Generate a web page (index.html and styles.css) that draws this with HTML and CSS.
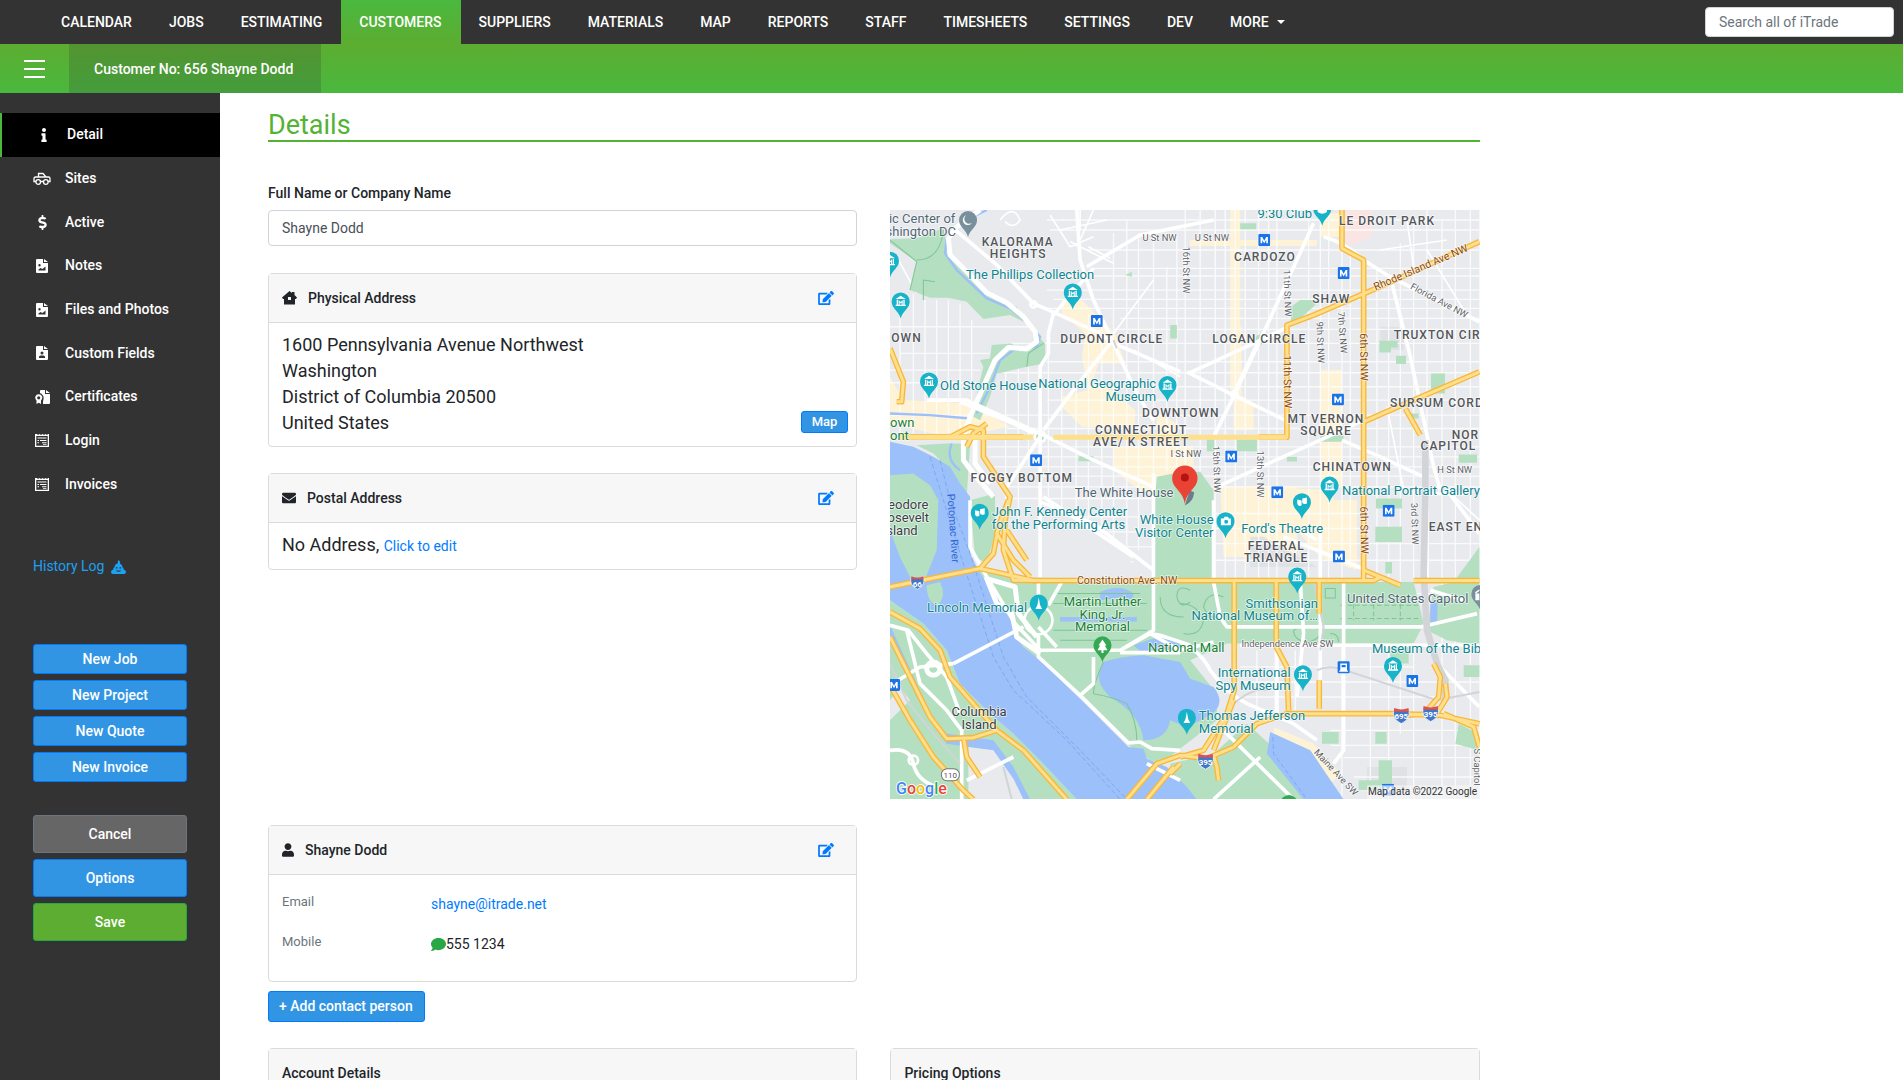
FILE: index.html
```html
<!DOCTYPE html>
<html lang="en">
<head>
<meta charset="utf-8">
<meta name="viewport" content="width=device-width, initial-scale=1">
<title>Customer 656 Shayne Dodd</title>
<link rel="stylesheet" href="styles.css">
</head>
<body>
<svg class="defs" aria-hidden="true">
  <symbol id="i-edit" viewBox="0 0 576 512"><path d="M402.6 83.2l90.2 90.2c3.8 3.8 3.8 10 0 13.8L274.4 405.6l-92.8 10.3c-12.4 1.4-22.9-9.1-21.5-21.5l10.3-92.8L388.8 83.2c3.8-3.8 10-3.8 13.8 0zm162-22.9l-48.8-48.8c-15.2-15.2-39.9-15.2-55.2 0l-35.4 35.4c-3.8 3.8-3.8 10 0 13.8l90.2 90.2c3.8 3.8 10 3.8 13.8 0l35.4-35.4c15.2-15.3 15.2-40 0-55.2zM384 346.2V448H64V128h229.8c3.2 0 6.2-1.3 8.5-3.5l40-40c7.6-7.6 2.2-20.5-8.5-20.5H48C21.5 64 0 85.5 0 112v352c0 26.5 21.5 48 48 48h352c26.5 0 48-21.5 48-48V306.2c0-10.7-12.9-16-20.5-8.5l-40 40c-2.2 2.3-3.5 5.3-3.5 8.5z"/></symbol>
  <symbol id="i-image" viewBox="0 0 12 14"><path fill-rule="evenodd" d="M1 0h6v4h5v9a1 1 0 0 1-1 1H1a1 1 0 0 1-1-1V1a1 1 0 0 1 1-1zM8 0l4 3H8zM3.500 5a1.200 1.200 0 1 0 0 2.400 1.200 1.200 0 0 0 0-2.400zM2.500 11.500h7V7.500L6.500 10 4.500 9l-2 1.500z"/></symbol>
  <symbol id="i-list" viewBox="0 0 14 13"><path fill-rule="evenodd" d="M0 0h2l1 1 1.500-1L6 1l1.500-1L9 1l1.500-1L12 1l1-1h1v13H0zM1.300 2v9.700h11.400V2zM2.500 3.500h9v1h-9zM2.500 6h1.500v1H2.500zM5 6h6.500v1H5zM2.500 8.300H4v1H2.500zM7 8.300h4.500v1H7zM8 10h3.500v.8H8z"/></symbol>
  <symbol id="pin" viewBox="-30 -30 60 85" overflow="visible"><path d="M0 51C-5 28-27 22-27 0a27 27 0 0 1 54 0C27 22 5 28 0 51z"/></symbol>
  <symbol id="museum" viewBox="-30 -30 60 85" overflow="visible"><path class="pin-teal" d="M0 51C-5 28-27 22-27 0a27 27 0 0 1 54 0C27 22 5 28 0 51z"/><path class="glyph" d="M-15-7L0-17 15-7zM-12-5h4V10h-4zM8-5h4V10H8zM-15 10h30v4h-30zM-6 10V-4l6 6 6-6v14H3V3L0 6-3 3v7z"/></symbol>
  <symbol id="metro" viewBox="-18 -18 36 36"><rect class="metro-box" x="-18" y="-18" width="36" height="36" rx="4"/><path class="glyph" d="M-11 10V-9h5L0 2 6-9h5v19H6V0L0 10-6 0v10z"/></symbol>
  <symbol id="shield" viewBox="-21 -21 42 42" overflow="visible"><path class="shield-blue" d="M-18-17Q0-9 18-17 26 8 0 20-26 8-18-17z"/><path class="shield-red" d="M-18-19Q0-12 18-19l1 9h-38z"/></symbol>
</svg>

<header class="topnav">
  <nav class="topnav-links" aria-label="Primary">
    <a href="#">CALENDAR</a><a href="#">JOBS</a><a href="#">ESTIMATING</a><a href="#" class="active" aria-current="page">CUSTOMERS</a><a href="#">SUPPLIERS</a><a href="#">MATERIALS</a><a href="#">MAP</a><a href="#">REPORTS</a><a href="#">STAFF</a><a href="#">TIMESHEETS</a><a href="#">SETTINGS</a><a href="#">DEV</a><a href="#" class="more">MORE</a>
  </nav>
  <input class="search" type="search" placeholder="Search all of iTrade" aria-label="Search all of iTrade">
</header>

<div class="subbar">
  <button class="menu-btn" type="button" aria-label="Toggle menu"><span></span><span></span><span></span></button>
  <div class="crumb">Customer No: 656 Shayne Dodd</div>
</div>

<div class="shell">
  <aside class="sidebar">
    <nav class="side-links" aria-label="Customer">
      <a href="#" class="active"><span class="ico"><svg width="6" height="14" viewBox="0 0 192 512"><path d="M20 424.229h20V279.771H20c-11.046 0-20-8.954-20-20V212c0-11.046 8.954-20 20-20h112c11.046 0 20 8.954 20 20v212.229h20c11.046 0 20 8.954 20 20V492c0 11.046-8.954 20-20 20H20c-11.046 0-20-8.954-20-20v-47.771c0-11.046 8.954-20 20-20zM96 0C56.235 0 24 32.235 24 72s32.235 72 72 72 72-32.235 72-72S135.764 0 96 0z"/></svg></span>Detail</a>
      <a href="#"><span class="ico"><svg width="18" height="14" viewBox="0 0 18 14" class="line"><path d="M3 9.500H1V6.500Q1 5 2.500 5H15.500Q17 5 17 6.500V9.500H15M7.500 9.500h3M5.500 5V1.500H10L13 5"/><circle cx="5.200" cy="10" r="2.300"/><circle cx="12.800" cy="10" r="2.300"/></svg></span>Sites</a>
      <a href="#"><span class="ico"><svg width="9" height="15" viewBox="0 0 288 512"><path d="M209.2 233.4l-108-31.6C88.7 198.2 80 186.5 80 173.500c0-16.300 13.200-29.500 29.500-29.500h66.300c12.200 0 24.200 3.700 34.200 10.500 6.100 4.100 14.300 3.100 19.500-2l34.800-34c7.100-6.900 6.100-18.400-1.800-24.500C238 74.800 207.400 64.100 176 64V16c0-8.800-7.200-16-16-16h-32c-8.800 0-16 7.200-16 16v48h-2.500C45.800 64-5.400 118.700.5 183.600c4.200 46.100 39.400 83.600 83.800 96.600l102.500 30c12.500 3.700 21.200 15.300 21.200 28.300 0 16.300-13.200 29.500-29.500 29.500h-66.300C100 368 88 364.300 78 357.500c-6.100-4.100-14.300-3.100-19.500 2l-34.800 34c-7.100 6.900-6.100 18.400 1.800 24.500 24.500 19.200 55.100 29.900 86.500 30v48c0 8.800 7.200 16 16 16h32c8.800 0 16-7.200 16-16v-48.200c46.600-.9 90.300-28.600 105.700-72.700 21.500-61.600-14.600-124.800-72.500-141.700z"/></svg></span>Active</a>
      <a href="#"><span class="ico"><svg width="12" height="14"><use href="#i-image"/></svg></span>Notes</a>
      <a href="#"><span class="ico"><svg width="12" height="14"><use href="#i-image"/></svg></span>Files and Photos</a>
      <a href="#"><span class="ico"><svg width="12" height="14" viewBox="0 0 12 14"><path fill-rule="evenodd" d="M1 0h6v4h5v9a1 1 0 0 1-1 1H1a1 1 0 0 1-1-1V1a1 1 0 0 1 1-1zM8 0l4 3H8zM6 5.500a1.500 1.500 0 1 0 0 3 1.500 1.500 0 0 0 0-3zM3 12h6v-1Q9 9.500 7.500 9.500h-3Q3 9.500 3 11z"/></svg></span>Custom Fields</a>
      <a href="#"><span class="ico"><svg width="15" height="14" viewBox="0 0 15 14"><path fill-rule="evenodd" d="M5 3V1a1 1 0 0 1 1-1h4v4h5v9a1 1 0 0 1-1 1H8V11.500Q9.500 7 7.500 5 6.500 3.500 5 3zM11 0l4 3h-4zM3.700 4.200a3.500 3.500 0 0 1 2.300 6.200V14l-2.200-1.200L1.500 14v-3.600a3.500 3.500 0 0 1 2.200-6.200zm0 2a1.600 1.600 0 1 0 0 3.200 1.600 1.600 0 0 0 0-3.200z"/></svg></span>Certificates</a>
      <a href="#"><span class="ico"><svg width="14" height="13"><use href="#i-list"/></svg></span>Login</a>
      <a href="#"><span class="ico"><svg width="14" height="13"><use href="#i-list"/></svg></span>Invoices</a>
    </nav>
    <a href="#" class="history">History Log <svg width="15" height="14" viewBox="0 0 15 14"><path fill-rule="evenodd" d="M7 0Q10 1.500 9 4q2.500.3 2.300 3 1.700.5 1.400 2.500Q15 10 15 12t-2 2H2q-2 0-2-2t2.300-2.500Q2 7.500 3.700 7 3.300 4.500 5.500 4 7.500 3 7 0zM4.800 7.300v1.200h1.700V7.300zM8.500 7.300v1.200h1.700V7.300zM4.500 10.400q3 2.800 6 0z"/></svg></a>
    <div class="side-actions">
      <button type="button" class="btn">New Job</button>
      <button type="button" class="btn">New Project</button>
      <button type="button" class="btn">New Quote</button>
      <button type="button" class="btn">New Invoice</button>
    </div>
    <div class="side-actions large">
      <button type="button" class="btn grey">Cancel</button>
      <button type="button" class="btn">Options</button>
      <button type="submit" class="btn green">Save</button>
    </div>
  </aside>

  <main class="content">
    <div class="inner">
      <h1>Details</h1>
      <div class="columns">
        <div class="col">
          <label for="fullname">Full Name or Company Name</label>
          <input id="fullname" class="field" type="text" value="Shayne Dodd">
          <section class="card">
            <header><svg width="15" height="14" viewBox="0 0 15 14"><path fill-rule="evenodd" d="M7.500 0L10 2V1h2.500v3L15 6.500 14 8h-1v5.500H2V8H1L0 6.500zM6 6v3h3V6z"/></svg><h2>Physical Address</h2><a href="#" class="edit" aria-label="Edit physical address"><svg width="16" height="14"><use href="#i-edit"/></svg></a></header>
            <div class="card-body address"><address>1600 Pennsylvania Avenue Northwest<br>Washington<br>District of Columbia 20500<br>United States</address><button type="button" class="btn small">Map</button></div>
          </section>
          <section class="card">
            <header><svg width="14" height="14" viewBox="0 0 512 512"><path d="M502.3 190.8c3.9-3.1 9.7-.2 9.7 4.7V400c0 26.500-21.500 48-48 48H48c-26.500 0-48-21.500-48-48V195.600c0-5 5.700-7.800 9.700-4.700 22.400 17.400 52.100 39.500 154.100 113.600 21.100 15.400 56.700 47.800 92.200 47.600 35.700.3 72-32.800 92.300-47.600 102-74.100 131.600-96.300 154-113.700zM256 320c23.200.4 56.600-29.200 73.400-41.400 132.700-96.300 142.800-104.700 173.400-128.700 5.800-4.500 9.200-11.500 9.200-18.900v-19c0-26.500-21.500-48-48-48H48c-26.500 0-48 21.500-48 48v19c0 7.400 3.400 14.300 9.200 18.900 30.600 23.900 40.700 32.400 173.400 128.700 16.800 12.200 50.200 41.800 73.400 41.400z"/></svg><h2>Postal Address</h2><a href="#" class="edit" aria-label="Edit postal address"><svg width="16" height="14"><use href="#i-edit"/></svg></a></header>
            <div class="card-body address"><p>No Address, <a href="#">Click to edit</a></p></div>
          </section>
        </div>
        <div class="map">
          <svg viewBox="30 30 1767 1767" role="img" aria-label="Map of Washington DC around the White House">
            <rect class="land" x="30" y="30" width="1767" height="1767"/>
            <g class="shop">
              <path d="M545 300h60l40 40 60 60 30 90h-80l-20 60 60 20 70 60v50h-160l-60-60v-30l80-20-20-100 10-70-70-60zM1050 30h30v540h-30zM1320 510h65v350h-65zM1060 570l60 40v80h-60zM830 640l60 30v80h-60zM700 740h240v130H780l-80-60zM1020 860h230v210h-220zM1250 900h180v210l-110-40-70-80zM1140 860l220 10v60h-220zM30 530l40 70 200 10 120 70-100 20H160l-130-30zM1320 40h60v70h-60zM930 120h380v18H930zM1060 380h24v200h-24zM1180 1580l120 50 80 90-30 30-170-140z"/>
            </g>
            <path class="blush" d="M1395 30h80v80l-60 25-20-10z"/>
            <g class="block">
              <path d="M140 180h60l90 100h-110zM1150 1010l160 90h-200v-90zM500 1040l240 30v60H500zM1460 1700h120v70h-120zM1500 380h70v70h-70z"/>
            </g>
            <g class="minor">
              <path d="M500 60H1797M510 90H1797M620 150H1797M640 205H1797M560 228H1797M500 270H1797M520 298H1797M500 325H1797M30 380H450M720 355H1797M700 388H1797M390 430H1797M60 460H330M500 485H1797M30 510H300M370 518H1797M30 548H290M600 560H1797M500 600H1797M30 645H1797M380 685H1797M320 740H1797M330 770H1797M340 800H1797M480 828H1797M370 860H1797M380 895H820M500 950H820M500 995H820M500 1040H820M500 1085H760M1000 940H1450M1000 985H1450M1000 1030H1797M1000 1080H1797M1330 1180H1720M1330 1210H1720M1080 1400H1600M1080 1445H1797M1080 1490H1700M1350 1590H1797M1350 1635H1797M1390 1672H1797M1420 1730H1797M1440 1770H1797"/>
              <path d="M60 280V700M100 280V700M135 300V700M170 300V700M205 300V700M240 310V700M275 360V600M377 518V900M415 500V1000M445 500V800M505 400V1130M545 560V1130M588 560V1130M625 340V1130M665 360V1130M700 100V1100M740 60V1060M775 100V1050M820 100V1130M860 200V815M890 100V815M915 30V815M960 30V815M1005 30V1140M1035 30V1140M1065 30V1140M1095 30V1140M1135 30V1140M1165 30V1140M1190 30V1140M1285 60V1140M1320 30V1500M1345 30V1140M1385 140V1797M1410 150V1100M1490 200V1140M1525 250V1797M1560 130V1600M1600 60V1797M1640 30V700M1685 60V1797M1725 30V1797M1770 30V1797M1130 1350V1540M1185 1350V1540M1245 1350V1540M1470 1350V1797"/>
            </g>
            <g class="fine">
              <path d="M510 45L570 140 640 110M540 90L680 60M570 125L700 190M600 30V90M625 140L690 175M640 30L600 120M50 170L110 280M760 450L900 530M1500 150L1700 120M1580 60L1600 200M1640 150L1750 330M1700 870L1797 960M1520 620L1570 870M700 400L820 240M360 60Q400 10 420 60 400 90 375 65M30 930Q100 800 130 920"/>
            </g>
            <g class="park">
              <path d="M30 118L110 115 190 85 205 170 290 240 345 300 410 320 440 370 390 345 310 357 260 305 205 293 150 293 90 270 110 185 30 130z"/>
              <path d="M335 435L395 430 420 455 480 415 495 430V490L440 500 375 515 350 520 330 590 300 660 280 650 295 560 310 500 300 480 330 475z"/>
              <path d="M1233 320L1260 300h40l5 15-45 40-28 15zM1497 422h55v20h-20v15h-35zM1547 467h30v25h-30zM1652 520h42v60h-30l-12-10zM1135 405q18 0 10 28h-15zM1070 718h60v35h-60zM980 718h22v35h-22zM1320 705h70v20h-70zM870 375h20v40h-20zM735 225l20-10v15zM595 768h45v15h-45zM1735 763h55v25h-55zM1080 70h48v18h-48zM1590 640h25v15h-25zM1220 770h30v14h-30zM1487 895h78v30h-78zM1485 980h80v45h-80zM1515 1085h20v35h-20zM820 1500h20v20h-20zM1325 1595h50v35h-50zM1485 1595h34v35h-34z"/>
              <circle cx="480" cy="710" r="15"/><circle cx="1138" cy="416" r="12"/>
              <path d="M830 830L880 820 960 815 1000 870V1145H820V950z"/>
              <path d="M270 900L345 880 345 1000 320 1090 285 1070zM290 1110L470 1145H1600L1630 1270 1600 1330H1040L930 1380 1010 1480 1010 1560 880 1660 850 1690 810 1680 745 1635 600 1490 430 1340 395 1290 395 1240z"/>
              <path d="M1660 1160L1720 1145 1797 1040V1335L1700 1320 1640 1290zM1750 1395h47v35h-47zM1735 1570l60 30v50l-70-20zM1530 1290h55v100h-40l-15-20z"/>
              <path d="M30 1200L130 1270 200 1350 240 1450 330 1540 400 1600 490 1690 590 1797H30zM870 1690L1000 1660 1100 1570 1200 1660 1280 1797H900zM1435 1770h100v-90h-40v60h-60z"/>
              <path d="M200 730L270 730 260 890 210 810 160 760 110 735z"/>
            </g>
            <g class="water">
              <path d="M30 725L100 740 160 770 210 800 240 850 270 890V1060L300 1120 345 1180 395 1250 400 1300 430 1340 480 1380 600 1495 745 1640 790 1645 800 1675 860 1700 920 1760 950 1797H590L490 1690 400 1600 330 1540 240 1450 200 1350 130 1270 30 1200z"/>
              <path d="M670 1385Q710 1370 790 1365L900 1385 930 1435 1000 1460Q1040 1510 990 1545L920 1580 870 1560Q860 1620 790 1620 780 1540 690 1490 650 1450 657 1420z"/>
              <path d="M760 1335L820 1315 900 1320V1345L780 1352zM1170 1595L1290 1650 1390 1797H1270L1160 1660zM1650 1205h22l-2 70-20-10zM540 1250h230v14H540zM660 1175q60-25 100 5 0 25-30 10l-70 10z"/>
              <path d="M30 1275L60 1340 110 1450 160 1560 200 1600 340 1620 400 1700 450 1797H425L370 1720 330 1650 200 1630 110 1490 30 1320z"/>
            </g>
            <path class="creek" d="M320 30L230 75 200 115 195 160 230 210 320 295 390 325 440 365 480 410 470 440 400 450 360 480 330 560 290 640M30 640L150 645 270 655M215 730Q195 780 240 810"/>
            <g class="park">
              <path d="M30 825L100 820 150 855 175 900 170 1050 130 1150 95 1140 60 1070 30 990zM140 1155l40-10q20 40-5 70-35-5-35-60z"/>
              <circle cx="788" cy="1251" r="13"/>
            </g>
            <path class="land" d="M265 1640L340 1650 400 1735 430 1797H265zM385 1000L470 900 580 960 750 1060V1130H470zM30 1500L60 1460 90 1500 30 1560z"/>
            <g class="trail">
              <path d="M30 120Q80 160 110 185L90 270M110 180Q180 180 190 90M130 300V240L165 245M440 500L445 460 490 430M520 1180H780M520 1210H800M520 1290H800M540 1320H740M1030 1190q-50-20-60 30 20 50 60 20M930 1170q-40-20-40 20 10 40 40 15M910 1250q-70 0-70-60M900 1210q50 0 70 50-10 50-60 40M1240 1290q50-25 80 0 0 30-40 35-40-5-40-35M1335 1165h30v28h-30zM1350 1300q25 0 25 25"/>
              <path class="dash" d="M1380 1215H1620M1380 1255H1620M1420 1190V1260M1480 1190V1260M1560 1190V1260"/>
              <path d="M670 1385Q640 1450 640 1480 700 1490 740 1510 770 1560 770 1620"/>
            </g>
            <g class="ferry">
              <path d="M150 770L190 900 240 1060 340 1370 400 1470 560 1620 720 1797M180 780L210 900 270 1060 370 1370 440 1490 600 1650 740 1797M1178 1610L1180 1660 1280 1797"/>
            </g>
            <g class="street">
              <path d="M220 85L345 190 460 310 540 345 660 400 700 430 900 515M590 30L600 180 640 300 700 430 770 580 820 660M620 200L780 105 1000 60M520 345L640 205M505 400L520 340M505 400V460L480 500V1130M690 430L580 570 490 690M140 600H260L480 700 560 740 640 780 820 860M240 605L400 670 460 700M480 710L380 860"/>
              <path d="M1300 70L1140 420 1060 590 1000 710M920 515L1060 585 1215 660M925 520L1120 430 1215 385M1130 435L1060 582M1330 110Q1400 130 1450 180L1520 225 1797 365M1530 230L1590 470 1660 800 1680 870M1450 660L1320 720 1010 860M1385 720L1500 770 1630 830M820 820V1130M490 890L760 1070M1210 1010L1460 1110M1650 1170L1750 1200M1250 980L1310 1020M480 905L640 970 820 1110"/>
              <path d="M820 1145V1290L720 1350 480 1350 405 1270 320 1130 270 1040 270 900M220 1390L430 1280M475 1145V1200M545 1145L505 1215M475 1300V1370L600 1485 745 1628 780 1625 815 1645 900 1650M640 1370V1450L600 1485M475 1280L530 1340M720 1350L810 1300 900 1350 1000 1325M810 1300L840 1305 930 1335M720 1357H900M1080 1335H1797M900 1325Q960 1350 990 1410 1040 1480 1100 1510L1240 1570 1310 1620"/>
              <path d="M1000 900V1145L1020 1250 1040 1280H1620L1790 1240M1190 1145V1550M1320 1000V1520M1390 1140V1650L1360 1690M1660 1380L1797 1520M30 1275L85 1290 140 1360 200 1430 240 1540M80 1290L120 1450 200 1530 245 1590V1797M30 1455L120 1400 220 1390M1700 870L1797 1000"/>
              <path d="M1250 1490L1270 1300 1260 1145M800 1690L900 1740M1030 1590L1240 1797M30 1650Q90 1640 100 1690T170 1760M1000 1797L1140 1670"/>
              <path d="M260 1740L400 1670M1640 1140L1640 880 1750 880"/>
            </g>
            <path class="parkway" d="M300 30L230 80 205 115 210 165 260 215 320 278 380 308 430 350 465 395 470 425 440 447 385 442 345 480 310 560 270 650 250 710V780L280 820 340 890M285 690V790L330 850M180 1405a20 20 0 1 0-40 0 20 20 0 1 0 40 0M470 1310L415 1240 405 1160 320 1135 350 1210 395 1240 410 1310 480 1360M470 1140"/>
            <circle class="ring" cx="475" cy="1260" r="42"/>
            <g class="rail"><path d="M1635 720V890L1630 1120 1640 1290 1670 1390 1695 1440V1500" class="freeway"/><path d="M30 1390L80 1500 160 1600 240 1690M1310 1410Q1340 1395 1380 1405L1670 1500 1797 1475M700 420L710 445M1060 1510Q1120 1460 1160 1470M370 1700L395 1797M1300 1140L1330 1280 1320 1350"/></g>
            <g class="hwy-case">
              <path id="h1" d="M60 711H430M1135 711H1220V375L1300 345 1500 260 1797 125M1385 30V145L1450 180V1140M1450 665L1530 630 1797 515M1575 625L1620 705M30 445L70 545 65 605 50 605M460 1141H1480L1500 1130M1450 1110L1560 1155M1600 1141H1797"/>
              <path id="h2" d="M30 1160L200 1125 300 1105 340 1060 355 980 385 900M90 711H210L270 680 310 690 310 770 350 830 390 890 375 960 370 1050 400 1140 470 1141M300 1105L390 1125 460 1141M385 900L350 1000 400 1080 450 1130M320 670L280 700 260 740M380 990L440 1080"/>
              <path id="h3" d="M30 1235L120 1285 180 1350 210 1430 280 1510 350 1590 430 1650 560 1797M30 1310L100 1450 150 1550 200 1615 280 1612 350 1590M30 1455L90 1560 160 1670 250 1770 280 1797M250 1610L260 1670 300 1730"/>
              <path id="h4" d="M740 1797L830 1690 900 1665 980 1675 1060 1640 1130 1570 1220 1540 1550 1540 1680 1545 1797 1570M1062 1145V1470L1040 1540 970 1650 900 1670M870 1720L900 1690M1000 1665L1010 1700 1015 1740M1000 1650L1060 1500M1188 1145V1340L1220 1400 1225 1530M1317 1145V1240M1317 1440V1525M1660 1390L1680 1430 1675 1490 1640 1530M1695 1450L1700 1490 1670 1540 1560 1545M1690 1540L1780 1580 1797 1640M800 1797L880 1700"/>
            </g>
            <g class="hwy">
              <use href="#h1"/><use href="#h2"/><use href="#h3"/><use href="#h4"/>
            </g>
            <path class="kst" d="M60 711H460M520 711H1220"/>
            <g class="ring"><circle cx="460" cy="313" r="9"/><circle cx="480" cy="710" r="16"/><circle cx="1062" cy="583" r="10"/><circle cx="100" cy="1680" r="14"/></g>

            <use href="#shield" x="91" y="1126" width="42" height="42"/><use href="#shield" x="951" y="1658" width="50" height="50"/><use href="#shield" x="1538" y="1521" width="50" height="50"/><use href="#shield" x="1626" y="1515" width="50" height="50"/>
            <rect class="route" x="184" y="1705" width="54" height="36" rx="17"/>
            <g class="shield-text"><text x="112" y="1159">66</text><text x="976" y="1695">395</text><text x="1563" y="1557">695</text><text x="1651" y="1551">395</text></g>
            <text class="route-text" x="211" y="1732">110</text>

            <g><use href="#metro" x="632" y="345" width="36" height="36"/><use href="#metro" x="450" y="762" width="36" height="36"/><use href="#metro" x="1134" y="102" width="36" height="36"/><use href="#metro" x="1372" y="201" width="36" height="36"/><use href="#metro" x="1355" y="580" width="36" height="36"/><use href="#metro" x="1035" y="751" width="36" height="36"/><use href="#metro" x="1173" y="858" width="36" height="36"/><use href="#metro" x="1507" y="914" width="36" height="36"/><use href="#metro" x="1358" y="1051" width="36" height="36"/><use href="#metro" x="1578" y="1424" width="36" height="36"/><use href="#metro" x="24" y="1436" width="36" height="36"/><use href="#metro" x="1505" y="1750" width="36" height="36"/></g>
            <rect class="metro-box" x="1372" y="1383" width="36" height="36" rx="4"/><path class="glyph" fill-rule="evenodd" d="M1380 1390h20v18l4 6h-28l4-6zM1384 1394v7h12v-7z"/>

            <g><use href="#museum" x="0" y="152" width="60" height="85"/><use href="#museum" x="32" y="274" width="60" height="85"/><use href="#museum" x="548" y="247" width="60" height="85"/><use href="#museum" x="117" y="514" width="60" height="85"/><use href="#museum" x="832" y="525" width="60" height="85"/><use href="#museum" x="1318" y="826" width="60" height="85"/><use href="#museum" x="1221" y="1099" width="60" height="85"/><use href="#museum" x="1238" y="1392" width="60" height="85"/><use href="#museum" x="1508" y="1367" width="60" height="85"/></g>
            <g class="pin-teal"><use href="#pin" x="1296" y="-4" width="60" height="85"/><use href="#pin" x="269" y="908" width="60" height="85"/><use href="#pin" x="1235" y="876" width="60" height="85"/><use href="#pin" x="1006" y="933" width="60" height="85"/><use href="#pin" x="446" y="1180" width="60" height="85"/><use href="#pin" x="890" y="1522" width="60" height="85"/></g>
            <g class="pin-grey"><use href="#pin" x="234" y="30" width="60" height="85"/><use href="#pin" x="1770" y="1151" width="60" height="85"/></g>
            <g class="pin-green"><use href="#pin" x="637" y="1305" width="60" height="85"/><circle cx="1226" cy="1810" r="26"/></g>
            <g class="glyph"><path d="M258 46a15 15 0 1 0 18 22 12 12 0 0 1-18-22zM1312 30h28v6q-14 10-28 0zM285 930l13 3v14q-10 6-13-4zM300 927l14-3v18q-10 4-14-2zM1251 898l13 3v14q-10 6-13-4zM1266 895l14-3v18q-10 4-14-2zM1022 955h8l3-5h10l3 5h6v20h-30zM476 1192l4 22 6 12h-20l6-12zM920 1534l4 22 6 12h-20l6-12zM667 1318l12 18h-5l8 14h-12v8h-6v-8h-12l8-14h-5zM1785 1175l12-8v5l-10 8h10v20h-12z"/></g>
            <circle class="camera-eye" cx="1038" cy="965" r="6"/>
            <path class="pin-shadow" d="M914 916q26-12 28-40l-14-5z"/>
            <path class="pin-red" d="M914 911C908 870 876 865 876 834a38 38 0 0 1 76 0c0 31-32 36-38 77z"/><circle class="pin-dot" cx="914" cy="832" r="12"/>

            <g class="area">
              <text x="413" y="138">KALORAMA</text><text x="414" y="175">HEIGHTS</text><text x="34" y="425" class="start">OWN</text><text x="695" y="429">DUPONT CIRCLE</text><text x="902" y="652">DOWNTOWN</text><text x="783" y="702">CONNECTICUT</text><text x="783" y="738">AVE/ K STREET</text><text x="425" y="846">FOGGY BOTTOM</text><text x="1154" y="183">CARDOZO</text><text x="1520" y="76">LE DROIT PARK</text><text x="1353" y="308">SHAW</text><text x="1137" y="429">LOGAN CIRCLE</text><text x="1540" y="416" class="start">TRUXTON CIR</text><text x="1529" y="622" class="start">SURSUM CORD</text><text x="1337" y="669">MT VERNON</text><text x="1337" y="704">SQUARE</text><text x="1714" y="716" class="start">NOR</text><text x="1704" y="751">CAPITOL</text><text x="1416" y="812">CHINATOWN</text><text x="1188" y="1049">FEDERAL</text><text x="1188" y="1086">TRIANGLE</text><text x="1645" y="992" class="start">EAST EN</text>
            </g>
            <g class="poi">
              <text x="450" y="236">The Phillips Collection</text><text x="325" y="570">Old Stone House</text><text x="828" y="563" class="end">National Geographic</text><text x="828" y="602" class="end">Museum</text><text x="1132" y="53" class="start">9:30 Club</text><text x="1385" y="883" class="start">National Portrait Gallery</text><text x="335" y="946" class="start">John F. Kennedy Center</text><text x="335" y="985" class="start">for the Performing Arts</text><text x="1000" y="971" class="end">White House</text><text x="1000" y="1010" class="end">Visitor Center</text><text x="1083" y="998" class="start">Ford's Theatre</text><text x="441" y="1236" class="end">Lincoln Memorial</text><text x="1313" y="1222" class="end">Smithsonian</text><text x="1313" y="1260" class="end">National Museum of…</text><text x="1475" y="1357" class="start">Museum of the Bib</text><text x="1231" y="1430" class="end">International</text><text x="1231" y="1468" class="end">Spy Museum</text><text x="956" y="1559" class="start">Thomas Jefferson</text><text x="956" y="1597" class="start">Memorial</text>
            </g>
            <g class="poi slate"><text x="226" y="68" class="end">ic Center of</text><text x="228" y="107" class="end">shington DC</text><text x="880" y="891" class="end">The White House</text><text x="1764" y="1208" class="end">United States Capitol</text></g>
            <g class="poi green"><text x="30" y="681" class="start">own</text><text x="30" y="719" class="start">ont</text><text x="667" y="1216">Martin Luther</text><text x="667" y="1255">King, Jr.</text><text x="667" y="1293">Memorial</text><text x="1033" y="1354" class="end">National Mall</text></g>
            <g class="poi dark"><text x="145" y="926" class="end">eodore</text><text x="147" y="965" class="end">osevelt</text><text x="113" y="1004" class="end">sland</text><text x="297" y="1548">Columbia</text><text x="297" y="1586">Island</text></g>
            <g class="road">
              <text x="838" y="122">U St NW</text><text x="995" y="123">U St NW</text><text x="917" y="770">I St NW</text><text x="1723" y="818">H St NW</text><text x="1222" y="1339">Independence Ave SW</text>
              <text transform="translate(908 210) rotate(90)">16th St NW</text><text transform="translate(1212 280) rotate(88)">11th St NW</text><text transform="translate(1311 427) rotate(88)">9th St NW</text><text transform="translate(1377 398) rotate(86)">7th St NW</text><text transform="translate(1000 808) rotate(88)">15th St NW</text><text transform="translate(1129 822) rotate(90)">13th St NW</text><text transform="translate(1594 971) rotate(88)">3rd St NW</text><text transform="translate(1672 310) rotate(28)">Florida Ave NW</text><text transform="translate(1360 1722) rotate(47)">Maine Ave SW</text><text transform="translate(1781 1700) rotate(90)">S Capitol</text>
            </g>
            <g class="road major"><text x="741" y="1150">Constitution Ave. NW</text><text transform="translate(1211 545) rotate(89)">11th St NW</text><text transform="translate(1440 471) rotate(89)">6th St NW</text><text transform="translate(1441 990) rotate(89)">6th St NW</text><text transform="translate(1625 212) rotate(-23)">Rhode Island Ave NW</text></g>
            <text class="river" transform="translate(209 985) rotate(86)">Potomac River</text>
            <text class="google" x="48" y="1780"><tspan class="g-blue">G</tspan><tspan class="g-red">o</tspan><tspan class="g-gold">o</tspan><tspan class="g-blue">g</tspan><tspan class="g-green">l</tspan><tspan class="g-red">e</tspan></text>
            <rect class="credit-bg" x="1460" y="1755" width="337" height="42"/><text class="credit" x="1790" y="1784">Map data ©2022 Google</text>
          </svg>
        </div>
      </div>

      <div class="columns second">
        <div class="col">
          <section class="card contact">
            <header><svg width="12" height="14" viewBox="0 0 448 512"><path d="M224 256c70.7 0 128-57.3 128-128S294.7 0 224 0 96 57.3 96 128s57.3 128 128 128zm89.6 32h-16.700c-22.200 10.200-46.900 16-72.900 16s-50.600-5.800-72.900-16h-16.700C60.200 288 0 348.200 0 422.400V464c0 26.500 21.500 48 48 48h352c26.500 0 48-21.500 48-48v-41.600c0-74.200-60.200-134.400-134.400-134.400z"/></svg><h2>Shayne Dodd</h2><a href="#" class="edit" aria-label="Edit contact"><svg width="16" height="14"><use href="#i-edit"/></svg></a></header>
            <dl class="card-body">
              <dt>Email</dt><dd><a href="#">shayne@itrade.net</a></dd>
              <dt>Mobile</dt><dd><svg width="15" height="15" viewBox="0 0 512 512"><path d="M256 32C114.600 32 0 125.100 0 240c0 49.600 21.400 95 57 130.700C44.500 421.100 2.700 466 2.200 466.500c-2.200 2.300-2.800 5.700-1.500 8.700S4.800 480 8 480c66.300 0 116-31.800 140.600-51.400 32.700 12.300 69 19.400 107.400 19.400 141.400 0 256-93.100 256-208S397.400 32 256 32z"/></svg>555 1234</dd>
            </dl>
          </section>
          <button type="button" class="btn add">+ Add contact person</button>
        </div>
      </div>
      <div class="columns third">
        <section class="card"><header><h2>Account Details</h2></header><div class="card-body"></div></section>
        <section class="card"><header><h2>Pricing Options</h2></header><div class="card-body"></div></section>
      </div>
    </div>
  </main>
</div>
</body>
</html>
```
FILE: styles.css
```css
* { box-sizing: border-box; }
body {
  margin: 0;
  height: 100vh;
  display: flex;
  flex-direction: column;
  overflow: hidden;
  font-family: Roboto, "Liberation Sans", sans-serif;
  font-size: 14px;
  line-height: 1.5;
  color: #212529;
  background: #fff;
}
h1, h2, p, dl, dd, address { margin: 0; font-style: normal; }
a { color: #007bff; text-decoration: none; }
button, input { font: inherit; }
svg { fill: currentColor; flex: none; }
.defs { position: absolute; width: 0; height: 0; }

/* top navigation */
.topnav {
  display: flex;
  align-items: center;
  justify-content: space-between;
  height: 44px;
  flex: none;
  padding: 0 9px 0 43px;
  background: #333;
}
.topnav-links { display: flex; align-self: stretch; }
.topnav-links a {
  display: flex;
  align-items: center;
  padding: 0 19px 0 18px;
  color: #fff;
  font-weight: 500;
}
.topnav-links .active { background: linear-gradient(#4ab83e, #5cad31); }
.topnav-links .more::after {
  content: "";
  margin-left: 8px;
  border: 4px solid transparent;
  border-top-color: #fff;
  border-bottom: 0;
}
.search {
  width: 189px;
  height: 30px;
  padding: 0 13px;
  border: 1px solid #ced4da;
  border-radius: 4px;
  background: #fff;
}
.search::placeholder { color: #6c757d; opacity: 1; }

.subbar {
  display: flex;
  height: 49px;
  flex: none;
  background: linear-gradient(#5cad31, #4ab83e);
}
.menu-btn {
  width: 69px;
  display: flex;
  flex-direction: column;
  justify-content: center;
  align-items: center;
  gap: 6px;
  padding: 0;
  border: 0;
  background: none;
}
.menu-btn span { width: 21px; height: 2px; background: #fff; }
.crumb {
  display: flex;
  align-items: center;
  padding: 2px 28px 0 25px;
  color: #fff;
  font-weight: 500;
  background: rgba(51, 51, 51, .2);
}

.shell { display: flex; flex: 1; min-height: 0; }

/* sidebar */
.sidebar { width: 220px; flex: none; padding-top: 20px; background: #333; }
.side-links { display: flex; flex-direction: column; height: 393px; }
.side-links a {
  display: flex;
  align-items: center;
  flex: 1;
  padding-left: 29px;
  color: #fff;
  font-weight: 500;
}
.side-links a.active {
  border-left: 2px solid #4ab83e;
  background: #000;
}
.ico { width: 26px; margin-right: 10px; display: flex; justify-content: center; }
.line { fill: none; stroke: currentColor; stroke-width: 1.3; }
.history {
  display: flex;
  align-items: center;
  gap: 7px;
  margin: 50px 33px 0;
  color: #1da1f2;
}
.side-actions {
  display: flex;
  flex-direction: column;
  gap: 6px;
  margin: 67px 33px 0;
}
.side-actions.large { margin-top: 33px; }
.btn {
  height: 30px;
  padding: 0 9px;
  border: 1px solid #007bff;
  border-radius: 3px;
  background: #3295e4;
  color: #fff;
  font-weight: 500;
}
.large .btn { height: 38px; }
.btn.grey { background: #666; border-color: #6c757d; }
.btn.green { background: #5cad31; border-color: #28a745; }

/* main column */
.content { flex: 1; min-width: 0; overflow-y: auto; scrollbar-width: none; }
.inner { width: 72%; margin-left: 48px; padding-top: 15px; }
h1 {
  height: 34px;
  line-height: 34px;
  border-bottom: 2px solid #53b335;
  color: #53b335;
  font-size: 27px;
  font-weight: 400;
}
.columns {
  display: grid;
  grid-template-columns: 1fr 1fr;
  gap: 33px;
  margin-top: 41px;
}
.col { display: flex; flex-direction: column; align-items: stretch; }
label { font-weight: 500; }
.field {
  height: 36px;
  margin-top: 6px;
  padding: 0 13px;
  border: 1px solid #ced4da;
  border-radius: 4px;
  color: #495057;
}
.card { margin-top: 27px; border: 1px solid #dbdbdb; border-radius: 4px; }
.card + .card { margin-top: 26px; }
.card header {
  display: flex;
  align-items: center;
  height: 49px;
  padding: 0 22px 0 13px;
  border-bottom: 1px solid #dbdbdb;
  background: #f7f7f7;
}
.card h2 { font-size: 14px; font-weight: 500; }
.card header svg + h2 { margin-left: 11px; }
.edit { display: flex; margin-left: auto; }
.card-body { padding: 9px 13px 10px; }
.address { display: flex; align-items: flex-end; justify-content: space-between; padding-right: 8px; font-size: 18px; line-height: 26px; }
.address a { font-size: 14px; }
.btn.small { height: 22px; margin-bottom: 3px; padding: 0 10px; font-size: 13px; line-height: 18px; }
.map { padding-top: 27px; }
.map svg { display: block; width: 100%; height: auto; }
.columns.second, .columns.third { margin-top: 26px; }
.second .card, .third .card { margin-top: 0; }
.contact dl {
  display: grid;
  grid-template-columns: 149px 1fr;
  grid-auto-rows: 40px;
  padding-top: 16px;
  padding-bottom: 10px;
}
dt { color: #6c757d; font-size: 13px; line-height: 22px; }
dd { display: flex; line-height: 26px; }
dd svg { margin-top: 6px; color: #28a745; }
.add { align-self: flex-start; height: 31px; margin-top: 9px; padding: 0 11px 0 10px; }
.third .card-body { height: 180px; }

/* map */
.land { fill: #e8eaed; }
.shop { fill: #fef3d6; }
.blush { fill: #fbe4e4; }
.block { fill: #dfe1e5; }
.park { fill: #b4dfc1; }
.water { fill: #9cc0f9; }
.minor, .fine, .street, .parkway, .creek, .rail, .trail, .ferry, .hwy, .hwy-case, .kst, .ring { fill: none; stroke-linejoin: round; }
.minor { stroke: #fff; stroke-width: 4; opacity: .8; }
.fine { stroke: #fff; stroke-width: 5; }
.street { stroke: #fff; stroke-width: 11; }
.parkway { stroke: #fff; stroke-width: 15; }
.ring { stroke: #fff; stroke-width: 8; }
.creek { stroke: #9cc0f9; stroke-width: 7; }
.rail { stroke: #d2d4d8; stroke-width: 6; }
.freeway { stroke-width: 20; }
.trail { stroke: #7cc694; stroke-width: 3; }
.dash, .ferry { stroke-dasharray: 14 8; }
.ferry { stroke: #6b9df0; stroke-width: 2; }
.hwy-case { stroke: #f9b739; stroke-width: 17; }
.hwy { stroke: #fddf8c; stroke-width: 9; }
.kst { stroke: #fddf8c; stroke-width: 15; }
.pin-teal { fill: #17b3c9; }
.pin-grey { fill: #78909c; }
.pin-green { fill: #34a853; }
.pin-red { fill: #ea4335; }
.pin-dot { fill: #b31412; }
.pin-shadow { fill: #6b7c8c; }
.camera-eye { fill: #17b3c9; }
.glyph { fill: #fff; }
.metro-box { fill: #1a73e8; }
.shield-blue { fill: #4277c8; stroke: #fff; stroke-width: 2; }
.shield-red { fill: #d9534f; }
.route { fill: #fff; stroke: #777; stroke-width: 3; }
.map text { font-family: Roboto, sans-serif; text-anchor: middle; paint-order: stroke; stroke: rgba(255, 255, 255, .7); stroke-width: 5px; stroke-linejoin: round; }
.map .start { text-anchor: start; }
.map .end { text-anchor: end; }
.area text { font-size: 36px; font-weight: 500; letter-spacing: 3px; fill: #53565b; }
.poi text { font-size: 39px; fill: #0e8590; }
.slate text { fill: #526773; }
.green text { fill: #188038; }
.dark text { fill: #3c4043; }
.road text { font-size: 28px; fill: #5f6368; }
.major text { font-size: 32px; fill: #8a4b14; }
.map .river { font-size: 32px; fill: #3367d6; stroke: none; }
.shield-text text, .map .route-text { font-size: 24px; font-weight: 700; fill: #fff; stroke: none; }
.map .route-text { fill: #555; font-weight: 400; }
.map .google { font-size: 48px; font-weight: 500; text-anchor: start; stroke: #fff; }
.g-blue { fill: #4285f4; }
.g-red { fill: #ea4335; }
.g-gold { fill: #fbbc05; }
.g-green { fill: #34a853; }
.credit-bg { fill: rgba(245, 245, 245, .7); }
.map .credit { font-size: 30px; fill: #333; text-anchor: end; stroke: none; }
```
